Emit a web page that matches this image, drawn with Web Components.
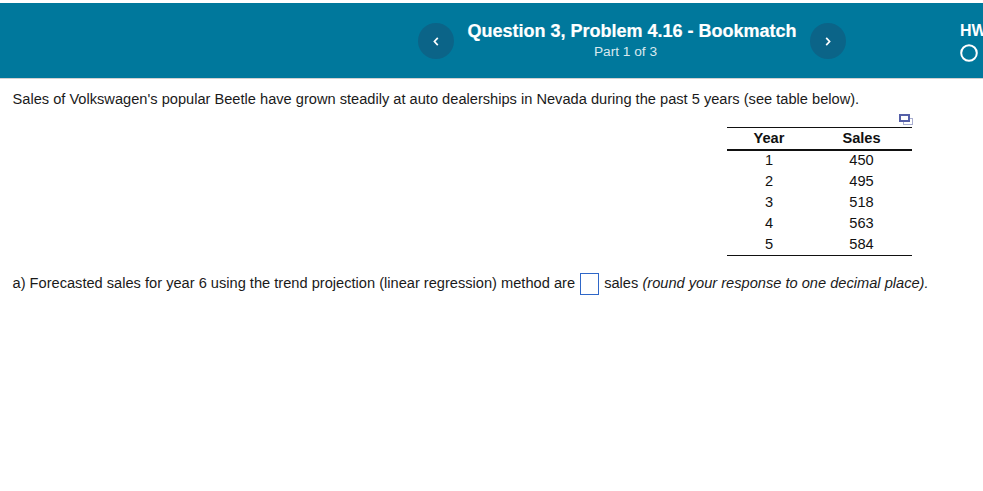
<!DOCTYPE html>
<html>
<head>
<meta charset="utf-8">
<title>Question 3</title>
<style>
    html, body { margin: 0; padding: 0; background: #fff; overflow: hidden; }
    body { font-family: "Liberation Sans", Arial, sans-serif; color: #1a1a1a; height: 491px; }
</style>
</head>
<body>
<question-banner title-text="Question 3, Problem 4.16 - Bookmatch" part="Part 1 of 3"></question-banner>
<question-body>
    <p-line>Sales of Volkswagen's popular Beetle have grown steadily at auto dealerships in Nevada during the past 5 years (see table below).</p-line>
    <sales-table></sales-table>
    <p-line class="answer">a) Forecasted sales for year 6 using the trend projection (linear regression) method are <answer-box></answer-box> sales <i>(round your response to one decimal place).</i></p-line>
</question-body>
<script>
class NavButton extends HTMLElement {
    connectedCallback() {
        this.attachShadow({ mode: 'open' });
        const next = this.getAttribute('dir') === 'next';
        this.shadowRoot.innerHTML = `
            <style>
                :host {
                    display: flex;
                    align-items: center;
                    justify-content: center;
                    width: 36px;
                    height: 36px;
                    border-radius: 50%;
                    background-color: #0b6488;
                    flex: none;
                }
                svg { display: block; }
            </style>
            <svg width="6" height="9" viewBox="0 0 6 9" fill="none" stroke="#fff" stroke-width="1.7">
                <path d="${next ? 'M1.2 0.8 L4.6 4.5 L1.2 8.2' : 'M4.8 0.8 L1.4 4.5 L4.8 8.2'}"/>
            </svg>
        `;
    }
}
customElements.define('nav-button', NavButton);

class QuestionBanner extends HTMLElement {
    connectedCallback() {
        this.attachShadow({ mode: 'open' });
        this.shadowRoot.innerHTML = `
            <style>
                :host {
                    display: block;
                    margin-top: 3px;
                    height: 75px;
                    background-color: #00789c;
                    border-bottom: 1px solid #d0d0d0;
                    color: #fff;
                    position: relative;
                    overflow: hidden;
                }
                .center {
                    display: flex;
                    align-items: center;
                    height: 100%;
                    padding-left: 418px;
                    padding-top: 1px;
                    box-sizing: border-box;
                }
                .titles {
                    width: 330px;
                    margin: -3px 13px 0;
                    text-align: center;
                    white-space: nowrap;
                }
                .title { font-size: 18px; font-weight: bold; line-height: 24px; -webkit-text-stroke: 0.2px #fff; }
                .part { font-size: 13.7px; line-height: 17px; color: #d9e8ee; margin: 0 13px 0 0; }
                .hw {
                    position: absolute;
                    left: 960px;
                    top: 18px;
                    white-space: nowrap;
                }
                .hw b { display: block; font-size: 16px; line-height: 20px; }
                .hw svg { display: block; margin: 2px 0 0 -1px; }
            </style>
            <div class="center">
                <nav-button dir="prev"></nav-button>
                <div class="titles">
                    <div class="title">${this.getAttribute('title-text')}</div>
                    <div class="part">${this.getAttribute('part')}</div>
                </div>
                <nav-button dir="next"></nav-button>
            </div>
            <div class="hw">
                <b>HW</b>
                <svg width="19" height="19" viewBox="0 0 19 19"><circle cx="10" cy="10" r="7.8" fill="none" stroke="#fff" stroke-width="2"/></svg>
            </div>
        `;
    }
}
customElements.define('question-banner', QuestionBanner);

class QuestionBody extends HTMLElement {
    connectedCallback() {
        this.attachShadow({ mode: 'open' });
        this.shadowRoot.innerHTML = `
            <style>
                :host {
                    display: flex;
                    flex-direction: column;
                    padding: 10px 0 0 12.5px;
                    font-size: 14.63px;
                }
            </style>
            <slot></slot>
        `;
    }
}
customElements.define('question-body', QuestionBody);

class PLine extends HTMLElement {
    connectedCallback() {
        this.attachShadow({ mode: 'open' });
        this.shadowRoot.innerHTML = `
            <style>
                :host { display: block; line-height: 20px; white-space: nowrap; }
                :host(.answer) { margin-top: 14px; line-height: 26px; }
            </style>
            <slot></slot>
        `;
    }
}
customElements.define('p-line', PLine);

class AnswerBox extends HTMLElement {
    connectedCallback() {
        this.attachShadow({ mode: 'open' });
        this.shadowRoot.innerHTML = `
            <style>
                :host {
                    display: inline-block;
                    box-sizing: border-box;
                    width: 19px;
                    height: 22px;
                    border: 1px solid #2f67c8;
                    vertical-align: middle;
                    margin: 0 1px;
                    background: #fff;
                }
            </style>
        `;
    }
}
customElements.define('answer-box', AnswerBox);

class SalesTable extends HTMLElement {
    connectedCallback() {
        this.attachShadow({ mode: 'open' });
        const rows = [[1, 450], [2, 495], [3, 518], [4, 563], [5, 584]];
        this.shadowRoot.innerHTML = `
            <style>
                :host {
                    display: block;
                    align-self: flex-end;
                    width: 185px;
                    margin: 3px 71px 0 0;
                    color: #111;
                }
                .icon { display: flex; justify-content: flex-end; height: 15px; padding-top: 2px; box-sizing: border-box; }
                .icon svg { display: block; margin-right: -1px; }
                table { border-collapse: collapse; table-layout: fixed; width: 100%; border-bottom: 1px solid #111; }
                th, td { text-align: center; padding: 1px 0 3px; font-size: 14.63px; line-height: 17px; height: 17px; font-weight: normal; }
                th { font-weight: bold; border-top: 1px solid #111; border-bottom: 2px solid #111; padding: 0; height: 21px; }
                th:first-child { width: 84px; }
                tr:last-child td { padding-bottom: 2px; }
            </style>
            <div class="icon">
                <svg width="14" height="11" viewBox="0 0 14 11" fill="none">
                    <rect x="4.5" y="4.5" width="9" height="6" stroke="#a9aed0"/>
                    <rect x="1" y="1" width="9" height="6" stroke="#5560a8" stroke-width="2" fill="#fff"/>
                </svg>
            </div>
            <table>
                <thead><tr><th>Year</th><th>Sales</th></tr></thead>
                <tbody>${rows.map(r => `<tr><td>${r[0]}</td><td>${r[1]}</td></tr>`).join('')}</tbody>
            </table>
        `;
    }
}
customElements.define('sales-table', SalesTable);
</script>
</body>
</html>
